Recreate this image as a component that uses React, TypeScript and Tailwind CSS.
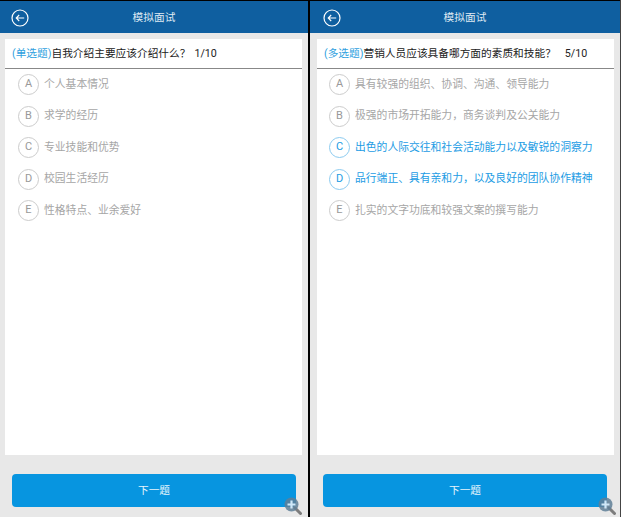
import React from "react";

function Zoom({ pos }: { pos: string }) {
  return (
    <svg className={`absolute bottom-[2px] ${pos}`} width="18" height="18" viewBox="0 0 18 18">
      <path d="M11 11 L16.5 16.5" stroke="#7d7d7d" strokeWidth="3" strokeLinecap="round" />
      <circle cx="7.5" cy="7.5" r="7" fill="#5f7f96" fillOpacity="0.85" />
      <path d="M7.5 3.5 V11.5 M3.5 7.5 H11.5" stroke="#cfe8f8" strokeWidth="2.2" />
    </svg>
  );
}

type Opt = { l: string; t: string; on?: boolean };

type PanelProps = {
  kind: string;
  q: string;
  num: string;
  numGap: string;
  opts: Opt[];
  w: string;
  card: string;
  btn: string;
  optPad: string;
  back: string;
  zoom: string;
};

function Panel({ kind, q, num, numGap, opts, w, card, btn, optPad, back, zoom }: PanelProps) {
  return (
    <div className={`relative h-full flex flex-col bg-[#e8e8e8] ${w}`}>
      <div className="h-[33px] pt-[3px] bg-[#0f5fa0] border-t border-black flex items-center justify-center relative shrink-0">
        <svg className={`absolute top-[8px] ${back}`} width="18" height="18" viewBox="0 0 18 18" fill="none" stroke="#ffffff">
          <circle cx="9" cy="9" r="8" strokeWidth="1.2" />
          <path d="M13.2 9 H5.2 M8.2 6 L5.2 9 L8.2 12" strokeWidth="1.1" />
        </svg>
        <span className="text-[10.7px] text-[#dfe9f3]">模拟面试</span>
      </div>
      <div className={`mt-[6px] h-[416px] bg-white shrink-0 ${card}`}>
        <div className="h-[30px] pt-[2px] border-b border-[#888888] flex items-center pl-[7px] text-[10.7px] whitespace-nowrap text-[#222222]">
          <span className="text-[#2f9fe0]">{kind}</span>
          <span>{q}</span>
          <span className={numGap}>{num}</span>
        </div>
        <div className={`flex flex-col gap-[10.5px] pt-[5px] ${optPad}`}>
          {opts.map((o) => (
            <div key={o.l} className="flex items-center gap-[5px] h-[21px]">
              <div className={`w-[21px] h-[21px] rounded-full border flex items-center justify-center text-[11px] shrink-0 ${o.on ? "border-[#8ccbf0] text-[#1c9ce4]" : "border-[#cccccc] text-[#999999]"}`}>{o.l}</div>
              <span className={`text-[10.8px] whitespace-nowrap pt-[1px] ${o.on ? "text-[#1c9ce4]" : "text-[#a6a6a6]"}`}>{o.t}</span>
            </div>
          ))}
        </div>
      </div>
      <div className={`mt-[19px] ${btn}`}>
        <div className="h-[33px] pt-[1px] rounded-[4px] bg-[#0795e0] flex items-center justify-center text-[10.7px] text-[#e6f4fc]">下一题</div>
      </div>
      <Zoom pos={zoom} />
    </div>
  );
}

export default function App() {
  return (
    <div className="w-[621px] h-[517px] flex bg-black overflow-hidden" style={{ fontFamily: '"Roboto","Noto Sans CJK SC",sans-serif' }}>
      <Panel
        w="w-[308px]"
        card="ml-[5px] w-[297px]"
        btn="ml-[12px] w-[284px]"
        optPad="pl-[13px]"
        back="left-[11px]"
        zoom="right-[6.5px]"
        numGap="ml-[4px]"
        kind="(单选题)"
        q="自我介绍主要应该介绍什么？"
        num="1/10"
        opts={[
          { l: "A", t: "个人基本情况" },
          { l: "B", t: "求学的经历" },
          { l: "C", t: "专业技能和优势" },
          { l: "D", t: "校园生活经历" },
          { l: "E", t: "性格特点、业余爱好" },
        ]}
      />
      <div className="w-[2px]" />
      <Panel
        w="w-[310px]"
        card="ml-[7px] w-[297px]"
        btn="ml-[13px] w-[284px]"
        optPad="pl-[12px]"
        back="left-[13px]"
        zoom="right-[4.5px]"
        numGap="ml-[9px]"
        kind="(多选题)"
        q="营销人员应该具备哪方面的素质和技能？"
        num="5/10"
        opts={[
          { l: "A", t: "具有较强的组织、协调、沟通、领导能力" },
          { l: "B", t: "极强的市场开拓能力，商务谈判及公关能力" },
          { l: "C", t: "出色的人际交往和社会活动能力以及敏锐的洞察力", on: true },
          { l: "D", t: "品行端正、具有亲和力，以及良好的团队协作精神", on: true },
          { l: "E", t: "扎实的文字功底和较强文案的撰写能力" },
        ]}
      />
      <div className="w-[1px] bg-[#444444]" />
    </div>
  );
}
